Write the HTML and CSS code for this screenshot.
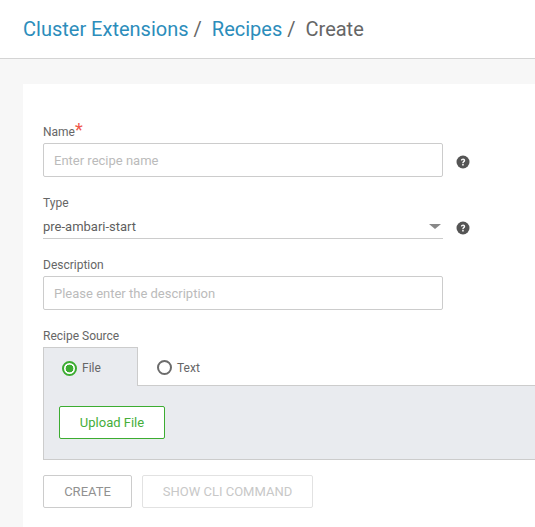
FILE: index.html
```html
<!DOCTYPE html>
<html lang="en">
<head>
<meta charset="utf-8">
<title>Create Recipe</title>
<link rel="stylesheet" href="styles.css">
</head>
<body>
<header class="header">
  <nav class="crumbs">
    <a class="crumb-link">Cluster Extensions</a><span class="sep">/</span>
    <a class="crumb-link">Recipes</a><span class="sep">/</span>
    <span class="crumb-current">Create</span>
  </nav>
</header>
<main class="content">
  <form class="card">
    <div class="field field-name">
      <label class="label">Name<span class="req">*</span></label>
      <div class="row">
        <div class="text-input placeholder">Enter recipe name</div>
        <svg class="help" viewBox="0 0 14 14"><circle cx="7" cy="7" r="6.5" fill="#555"/><path d="M4.9 5.4C5 4.2 5.9 3.5 7.1 3.5c1.2 0 2.1.8 2.1 1.9 0 1.6-1.6 1.5-1.6 2.9H6.2c0-1.9 1.5-1.9 1.5-2.9 0-.4-.3-.7-.7-.7-.4 0-.7.3-.8.8z" fill="#fff"/><rect x="6.2" y="9" width="1.5" height="1.5" fill="#fff"/></svg>
      </div>
    </div>
    <div class="field field-type">
      <label class="label">Type</label>
      <div class="row">
        <div class="select"><span>pre-ambari-start</span><i class="caret"></i></div>
        <svg class="help" viewBox="0 0 14 14"><circle cx="7" cy="7" r="6.5" fill="#555"/><path d="M4.9 5.4C5 4.2 5.9 3.5 7.1 3.5c1.2 0 2.1.8 2.1 1.9 0 1.6-1.6 1.5-1.6 2.9H6.2c0-1.9 1.5-1.9 1.5-2.9 0-.4-.3-.7-.7-.7-.4 0-.7.3-.8.8z" fill="#fff"/><rect x="6.2" y="9" width="1.5" height="1.5" fill="#fff"/></svg>
      </div>
    </div>
    <div class="field field-desc">
      <label class="label">Description</label>
      <div class="text-input placeholder">Please enter the description</div>
    </div>
    <div class="field field-source">
      <label class="label">Recipe Source</label>
      <div class="tabs">
        <div class="tab tab-active"><i class="radio radio-on"></i>File</div>
        <div class="tab"><i class="radio"></i>Text</div>
      </div>
      <div class="panel">
        <button type="button" class="upload">Upload File</button>
      </div>
    </div>
    <div class="actions">
      <button type="button" class="btn btn-create">CREATE</button>
      <button type="button" class="btn btn-disabled">SHOW CLI COMMAND</button>
    </div>
  </form>
</main>
</body>
</html>
```
FILE: styles.css
```css
* { box-sizing: border-box; }
html, body { margin: 0; height: 100%; overflow: hidden; }
body { font-family: Roboto, "Liberation Sans", sans-serif; background: #f7f7f7; color: #555; }
.header { height: 59px; background: #fff; border-bottom: 1px solid #d4d4d4; padding-left: 23px; display: flex; align-items: center; }
.crumbs { font-size: 20px; display: flex; align-items: center; white-space: nowrap; }
.crumb-link { color: #2c8dbb; }
.sep { color: #666; margin: 0 10px 0 5px; }
.crumb-current { color: #666; }
.content { padding: 25px 0 0 23px; }
.card { background: #fff; padding: 40px 0 20px 20px; height: 460px; }
.label { display: block; font-size: 12px; line-height: 16px; color: #666; }
.req { color: #f0584c; font-size: 18px; line-height: 12px; }
.row { display: flex; align-items: center; }
.field-name .label { margin-bottom: 3px; }
.text-input { width: 400px; height: 34px; border: 1px solid #ccc; border-radius: 2px; padding-left: 10px; font-size: 13px; line-height: 34px; }
.placeholder { color: #bbb; }
.help { width: 14px; height: 14px; margin-left: 13px; }
.field-name .help { margin-top: 3px; }
.field-type { margin-top: 18px; }
.select { width: 400px; height: 28px; border-bottom: 1px solid #ccc; display: flex; justify-content: space-between; align-items: center; font-size: 13px; color: #5f5f5f; padding: 4px 2px 0 0; }
.caret { width: 0; height: 0; border: 6px solid transparent; border-top: 5px solid #888; border-bottom: 0; }
.field-type .help { margin-top: 6px; }
.field-desc { margin-top: 18px; }
.field-desc .label { margin-bottom: 3px; }
.field-source { margin-top: 18px; }
.field-source .label { margin-bottom: 3px; }
.tabs { display: flex; height: 38px; position: relative; z-index: 1; }
.tab { width: 95px; height: 39px; display: flex; align-items: center; padding: 2px 0 0 19px; font-size: 12px; color: #666; }
.tab-active { background: #e9ebef; border: 1px solid #ccc; border-bottom: 0; padding-left: 18px; }
.radio { width: 15px; height: 15px; border: 2px solid #6b6b6b; border-radius: 50%; margin-right: 5px; background: #fff; display: block; }
.radio-on { border-color: #3cac31; background: radial-gradient(circle, #3cac31 0 3.6px, #fff 4.2px); }
.panel { height: 75px; background: #e9ebef; border: 1px solid #ccc; border-right: 0; padding: 20px 0 0 15px; }
.upload { width: 106px; height: 33px; background: #fff; border: 1px solid #3cac31; border-radius: 2px; color: #45ae3a; font: 13px Roboto, "Liberation Sans", sans-serif; padding: 0; }
.actions { display: flex; gap: 10px; margin-top: 15px; }
.btn { height: 33px; background: #fff; border-radius: 2px; font: 13px Roboto, "Liberation Sans", sans-serif; padding: 0; }
.btn-create { width: 89px; border: 1px solid #ccc; color: #919191; }
.btn-disabled { width: 171px; border: 1px solid #e2e2e2; color: #c8c8c8; }
```
